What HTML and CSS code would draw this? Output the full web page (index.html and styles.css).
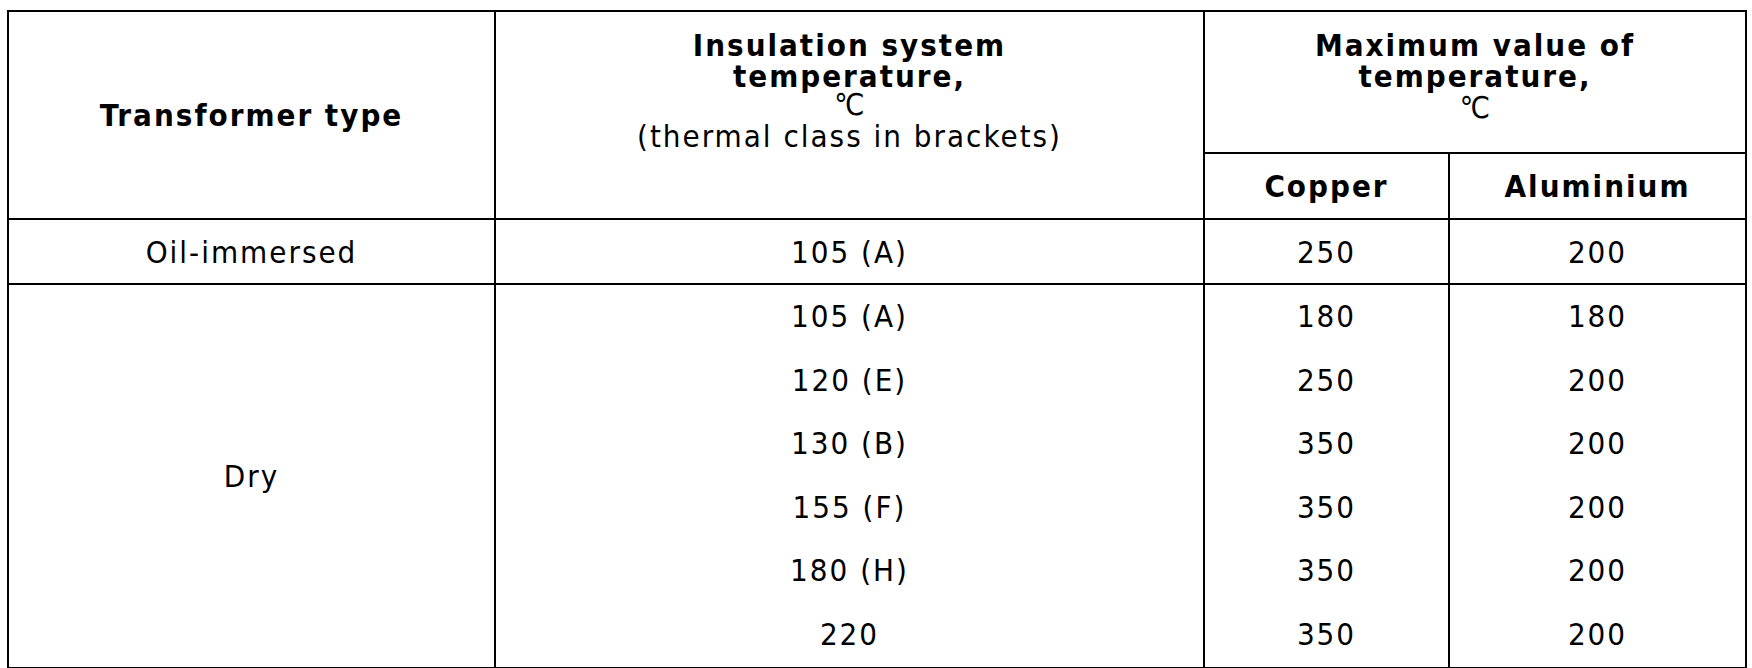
FILE: index.html
```html
<!DOCTYPE html>
<html>
<head>
<meta charset="utf-8">
<link rel="stylesheet" href="styles.css">
</head>
<body>
<table class="spec">
  <colgroup>
    <col class="c1"><col class="c2"><col class="c3"><col class="c4">
  </colgroup>
  <tr class="h1">
    <th rowspan="2" class="type">Transformer type</th>
    <th rowspan="2" class="top">
      <div class="bl">Insulation system</div>
      <div class="bl">temperature,</div>
      <div class="deg d1">℃</div>
      <div class="note">(thermal class in brackets)</div>
    </th>
    <th colspan="2" class="top">
      <div class="bl">Maximum value of</div>
      <div class="bl">temperature,</div>
      <div class="deg d2">℃</div>
    </th>
  </tr>
  <tr class="h2">
    <th>Copper</th>
    <th>Aluminium</th>
  </tr>
  <tr class="oil">
    <td>Oil-immersed</td>
    <td>105 (A)</td>
    <td>250</td>
    <td>200</td>
  </tr>
  <tr class="dry">
    <td>Dry</td>
    <td><div>105 (A)</div><div>120 (E)</div><div>130 (B)</div><div>155 (F)</div><div>180 (H)</div><div>220</div></td>
    <td><div>180</div><div>250</div><div>350</div><div>350</div><div>350</div><div>350</div></td>
    <td><div>180</div><div>200</div><div>200</div><div>200</div><div>200</div><div>200</div></td>
  </tr>
</table>
</body>
</html>
```
FILE: styles.css
```css
html, body {
  margin: 0;
  padding: 0;
  background: #fff;
}
body {
  padding: 10px 7px 0 7px;
  font-family: "DejaVu Sans Condensed", "DejaVu Sans", sans-serif;
  color: #000;
}
.spec {
  border-collapse: collapse;
  table-layout: fixed;
  width: 1738px;
  font-size: 31px;
  letter-spacing: 2px;
}
.c1 { width: 487px; }
.c2 { width: 709px; }
.c3 { width: 245px; }
.c4 { width: 297px; }
.spec th, .spec td {
  border: 2px solid #000;
  text-align: center;
  vertical-align: middle;
  padding: 0;
}
.spec th {
  font-weight: bold;
}
.spec th.top {
  vertical-align: top;
  padding-top: 18px;
}
.bl {
  line-height: 31px;
}
.deg {
  font-weight: normal;
  font-size: 30px;
  letter-spacing: 0;
}
.d1 {
  line-height: 25px;
}
.d2 {
  line-height: 31px;
}
.note {
  font-weight: normal;
  line-height: 31px;
  margin-top: 4px;
}
.h1 { height: 142px; }
.h2 { height: 66px; }
.oil { height: 65px; }
.dry td div {
  height: 63.6px;
  line-height: 63.6px;
}
```
